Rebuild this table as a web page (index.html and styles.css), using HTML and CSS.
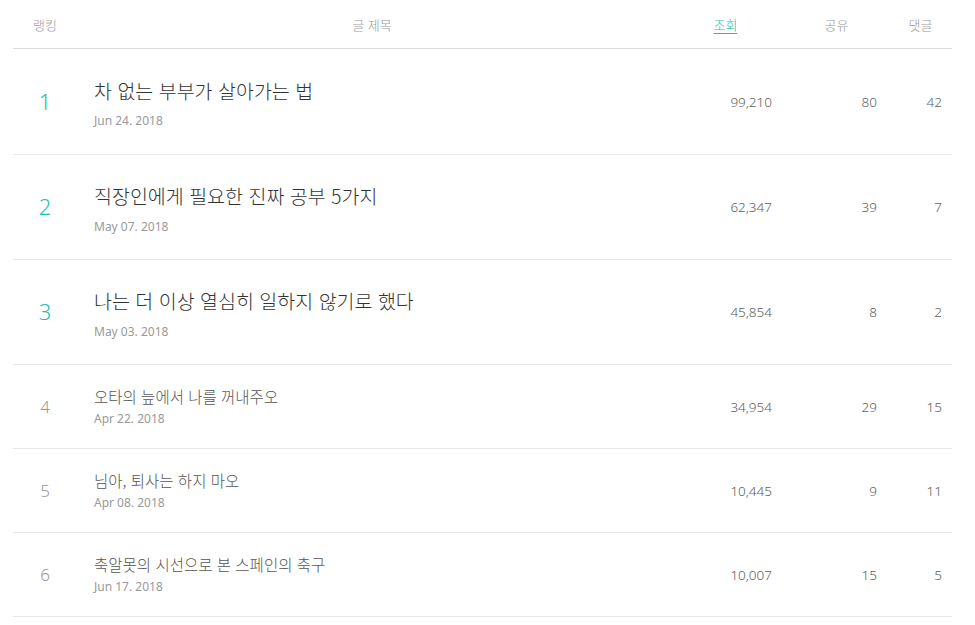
FILE: index.html
```html
<!DOCTYPE html>
<html lang="ko">
<head>
<meta charset="utf-8">
<link rel="stylesheet" href="styles.css">
</head>
<body>
<div class="board">
  <div class="row head">
    <div class="h-rank">랭킹</div>
    <div class="h-title">글 제목</div>
    <div class="h-views"><span class="active">조회</span></div>
    <div class="h-share">공유</div>
    <div class="h-cmt">댓글</div>
  </div>
  <div class="row big">
    <div class="c-rank top">1</div>
    <div class="c-title"><div class="t">차 없는 부부가 살아가는 법</div><div class="d">Jun 24. 2018</div></div>
    <div class="c-views num">99,210</div>
    <div class="c-share num">80</div>
    <div class="c-cmt num">42</div>
  </div>
  <div class="row big">
    <div class="c-rank top">2</div>
    <div class="c-title"><div class="t">직장인에게 필요한 진짜 공부 5가지</div><div class="d">May 07. 2018</div></div>
    <div class="c-views num">62,347</div>
    <div class="c-share num">39</div>
    <div class="c-cmt num">7</div>
  </div>
  <div class="row big">
    <div class="c-rank top">3</div>
    <div class="c-title"><div class="t">나는 더 이상 열심히 일하지 않기로 했다</div><div class="d">May 03. 2018</div></div>
    <div class="c-views num">45,854</div>
    <div class="c-share num">8</div>
    <div class="c-cmt num">2</div>
  </div>
  <div class="row small">
    <div class="c-rank">4</div>
    <div class="c-title"><div class="t">오타의 늪에서 나를 꺼내주오</div><div class="d">Apr 22. 2018</div></div>
    <div class="c-views num">34,954</div>
    <div class="c-share num">29</div>
    <div class="c-cmt num">15</div>
  </div>
  <div class="row small">
    <div class="c-rank">5</div>
    <div class="c-title"><div class="t">님아, 퇴사는 하지 마오</div><div class="d">Apr 08. 2018</div></div>
    <div class="c-views num">10,445</div>
    <div class="c-share num">9</div>
    <div class="c-cmt num">11</div>
  </div>
  <div class="row small">
    <div class="c-rank">6</div>
    <div class="c-title"><div class="t">축알못의 시선으로 본 스페인의 축구</div><div class="d">Jun 17. 2018</div></div>
    <div class="c-views num">10,007</div>
    <div class="c-share num">15</div>
    <div class="c-cmt num">5</div>
  </div>
</div>
</body>
</html>
```

FILE: styles.css
```css
html, body {
  margin: 0;
  padding: 0;
  background: #fff;
}
body {
  font-family: "Noto Sans CJK KR", "Noto Sans", sans-serif;
  color: #666;
}
.board {
  margin: 0 23px 0 13px;
}
.row {
  box-sizing: border-box;
  display: grid;
  grid-template-columns: 64px 590px 117px 105px 63px;
  align-items: center;
  border-bottom: 1px solid #e8e8e8;
}
.head {
  height: 49px;
  border-bottom: 1px solid #dcdcdc;
  font-size: 13px;
  color: #999;
  font-weight: 300;
}
.head > div {
  text-align: center;
}
.head .active {
  color: #1ebfae;
  text-decoration: underline;
  text-underline-offset: 3px;
}
.big { height: 105px; }
.big:nth-child(2) { height: 106px; }
.small { height: 84px; }
.c-rank {
  text-align: center;
  font-size: 17px;
  color: #999;
  font-family: "Noto Sans", sans-serif;
  font-weight: 300;
}
.c-rank.top {
  color: #1ebfae;
  font-size: 22px;
  padding-bottom: 2px;
}
.c-title {
  padding-left: 17px;
}
.big .c-title {
  padding-top: 4px;
}
.t {
  font-weight: 300;
  line-height: 1.3;
}
.big .t {
  font-size: 19.5px;
  color: #333;
}
.small .t {
  font-size: 15.5px;
  color: #555;
}
.d {
  font-size: 12px;
  color: #999;
  font-family: "Noto Sans", sans-serif;
}
.big .d { margin-top: 9px; }
.small .d { margin-top: 4px; }
.num {
  text-align: right;
  font-size: 13.5px;
  color: #5e5e5e;
  font-family: "Noto Sans", sans-serif;
  font-weight: 300;
}
.c-views.num { padding-right: 12px; }
.c-share.num { padding-right: 12px; }
.c-cmt.num { padding-right: 10px; }
```
